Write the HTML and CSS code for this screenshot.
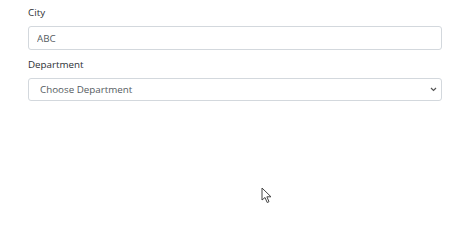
FILE: index.html
```html
<!DOCTYPE html>
<html>
<head>
<meta charset="utf-8">
<link rel="stylesheet" href="styles.css">
</head>
<body>
<form class="form">
  <div class="group">
    <label class="label" for="city">City</label>
    <input class="control" id="city" type="text" value="ABC">
  </div>
  <div class="group">
    <label class="label" for="dept">Department</label>
    <div class="select-wrap">
      <select class="control select" id="dept">
        <option>Choose Department</option>
      </select>
      <svg class="chevron" width="7" height="5" viewBox="0 0 7 5">
        <path d="M1 1 L3.5 3.5 L6 1" fill="none" stroke="#555" stroke-width="1.2"/>
      </svg>
    </div>
  </div>
</form>
<svg class="cursor" width="12" height="17" viewBox="0 0 12 17">
  <path d="M1 1 L1 13 L4 10.5 L6.2 15.5 L8 14.7 L5.9 9.8 L10 9.8 Z" fill="#fff" stroke="#444" stroke-width="1" stroke-linejoin="round"/>
</svg>
</body>
</html>
```
FILE: styles.css
```css
html, body {
  margin: 0;
  padding: 0;
  background: #fff;
}
body {
  font-family: "Open Sans", "Noto Sans", sans-serif;
  width: 474px;
  height: 247px;
  position: relative;
  overflow: hidden;
}
.form {
  display: flex;
  flex-direction: column;
  gap: 7px;
  padding: 5px 32px 0 28px;
  margin: 0;
}
.group {
  display: flex;
  flex-direction: column;
}
.label {
  font-size: 9.8px;
  line-height: 16px;
  color: #2b2f33;
  margin-bottom: 5px;
}
.control {
  box-sizing: border-box;
  width: 414px;
  height: 24px;
  margin: 0;
  padding: 0 8px;
  font-family: "Open Sans", "Noto Sans", sans-serif;
  font-size: 9.8px;
  color: #555b61;
  background: #fff;
  border: 1px solid #d3d8dd;
  border-radius: 3px;
  outline: none;
}
.select-wrap {
  position: relative;
  width: 414px;
}
.select {
  -webkit-appearance: none;
  appearance: none;
  padding: 0 20px 0 11px;
  height: 23px;
  display: block;
}
.chevron {
  position: absolute;
  right: 5px;
  top: 9px;
}
.cursor {
  position: absolute;
  left: 261px;
  top: 187px;
}
```
